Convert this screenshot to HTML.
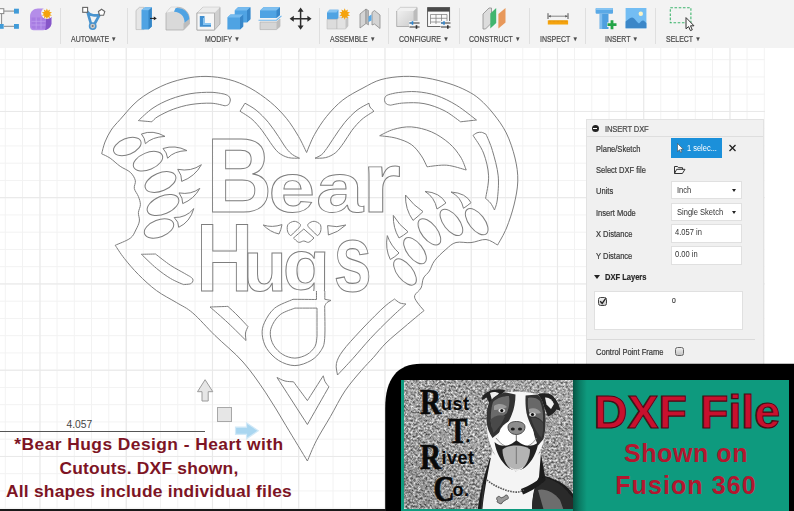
<!DOCTYPE html>
<html>
<head>
<meta charset="utf-8">
<title>Insert DXF - Bear Hugs</title>
<style>
*{box-sizing:border-box;margin:0;padding:0}
html,body{width:794px;height:511px;overflow:hidden;background:#fff;font-family:"Liberation Sans",sans-serif}
#root{position:absolute;left:0;top:0;width:794px;height:511px;overflow:hidden;background:#fff}
.abs{position:absolute}
#grid{position:absolute;left:0;top:0;width:794px;height:511px}
#toolbar{position:absolute;left:0;top:0;width:794px;height:47.5px;background:#f3f3f3}
.sep{position:absolute;top:8px;width:1px;height:36px;background:#dfdfdf}
.tl{position:absolute;top:33.9px;height:10px;font-size:8.3px;line-height:10px;color:#4a4a4a;-webkit-text-stroke:.2px #4a4a4a;white-space:nowrap;letter-spacing:0;filter:blur(.3px);transform:scaleX(.84);transform-origin:0 0}
.tl i{font-style:normal;font-size:6px;margin-left:3px;position:relative;top:-0.5px;display:inline-block;transform:scaleX(1.1)}
#panel{position:absolute;left:586px;top:119px;width:178px;height:250px;background:#f0f0f0;border:1px solid #e2e2e2;filter:blur(.3px)}
#panel .hd{position:absolute;left:0;top:0;width:100%;height:17px;border-bottom:1px solid #dedede;background:#f1f1f1}
.pl{position:absolute;left:9px;font-size:8.4px;line-height:10px;color:#383838;-webkit-text-stroke:.2px #383838;white-space:nowrap;transform:scaleX(.9);transform-origin:0 0}
.inp span{display:inline-block;transform:scaleX(.9);transform-origin:0 0}
.inp{position:absolute;left:84px;width:71px;height:18px;background:#fff;border:1px solid #e0e0e0;font-size:8.4px;line-height:16px;color:#333;padding-left:5px;white-space:nowrap}
.caret{position:absolute;right:5px;top:7px;width:0;height:0;border-left:2.5px solid transparent;border-right:2.5px solid transparent;border-top:3px solid #222}
#caption{position:absolute;left:0;top:433.3px;width:298px;text-align:center;color:#7d1424;font-weight:bold;font-size:17.4px;line-height:23.45px;white-space:nowrap;letter-spacing:0.22px}
#blk{position:absolute;left:385px;top:363.7px;width:420px;height:160px;background:#000;border-top-left-radius:37px 40px}
#green{position:absolute;left:401px;top:380px;width:388px;height:131px;background:#0e9a7e}
#dog{position:absolute;left:404.3px;top:380px;width:169px;height:128.6px}
.red{position:absolute;text-align:center;font-weight:bold;white-space:nowrap}
</style>
</head>
<body>
<div id="root">

<!-- canvas grid -->
<svg id="grid" viewBox="0 0 794 511">
<defs>
<pattern id="gm" x="4.8" y="7.45" width="17.25" height="17.25" patternUnits="userSpaceOnUse">
<path d="M0.5 0V17.25M0 0.5H17.25" stroke="#f2f2f2" stroke-width="1" fill="none"/>
</pattern>
<pattern id="gM" x="39.55" y="24.7" width="86.25" height="86.25" patternUnits="userSpaceOnUse">
<path d="M0.5 0V86.25M0 0.5H86.25" stroke="#e8e8e8" stroke-width="1" fill="none"/>
</pattern>
</defs>
<rect width="765" height="511" fill="url(#gm)"/>
<rect width="765" height="511" fill="url(#gM)"/>
</svg>

<!-- HEART -->
<svg id="heart" class="abs" style="left:0;top:0" width="794" height="511" viewBox="0 0 794 511">
<g fill="none" stroke="#7e7e7e" stroke-width="1" stroke-linejoin="round">
<path d="M101.7 153.8C102.2 151.8 103.4 146.0 105.0 142.0C106.6 138.0 108.7 133.8 111.2 130.0C113.8 126.2 115.8 124.2 120.3 119.3C124.8 114.4 131.3 105.9 138.0 100.4C144.7 94.9 153.1 90.1 160.7 86.5C168.3 82.9 175.8 80.6 183.4 78.9C191.0 77.2 198.4 76.3 206.0 76.4C213.6 76.5 221.5 77.6 228.8 79.5C236.1 81.4 243.1 84.2 250.0 88.0C256.9 91.8 264.2 97.0 270.3 102.0C276.4 107.0 281.7 112.6 286.4 118.3C291.1 124.0 295.1 130.7 298.5 136.4C301.9 142.1 305.2 149.8 306.6 152.5C307.9 149.5 311.2 140.4 314.6 134.4C318.0 128.4 322.0 122.0 326.7 116.3C331.4 110.6 336.8 104.7 342.8 100.0C348.9 95.3 356.6 91.4 363.0 88.0C369.4 84.6 374.2 81.5 381.0 79.6C387.8 77.7 396.1 76.7 403.7 76.4C411.3 76.1 418.9 76.8 426.5 78.0C434.1 79.2 442.3 81.4 449.0 83.5C455.7 85.6 461.7 88.1 466.9 90.8C472.1 93.5 475.6 95.6 480.0 99.5C484.4 103.4 489.2 108.4 493.6 114.0C498.0 119.6 502.7 125.7 506.3 133.0C509.9 140.3 513.1 150.0 515.0 158.0C516.9 166.0 518.0 173.2 517.8 181.0C517.6 188.8 515.9 197.2 514.0 205.0C512.1 212.8 509.2 221.3 506.5 228.0C503.8 234.7 499.1 242.2 497.6 245.0C495.7 244.1 490.4 239.9 486.0 239.5C481.6 239.1 476.0 242.1 471.0 242.6C466.0 243.1 460.2 241.4 456.0 242.5C451.8 243.6 449.5 246.3 445.9 249.4C442.3 252.5 437.2 257.2 434.5 260.8C431.8 264.4 431.2 268.1 429.4 271.0C427.6 273.9 424.9 275.2 423.5 278.0C422.1 280.8 422.5 285.1 421.0 288.0C419.5 290.9 415.4 293.2 414.7 295.5C414.0 297.8 415.4 299.5 417.0 302.0C418.6 304.5 422.8 309.2 424.0 310.6C420.8 313.2 411.3 321.1 405.0 326.5C398.7 331.9 391.2 337.9 386.0 343.0C380.8 348.1 377.7 352.7 373.6 357.3C369.5 361.9 366.2 364.9 361.4 370.5C356.6 376.1 350.2 383.2 345.0 390.9C339.8 398.6 335.2 408.3 330.4 416.6C325.6 424.9 320.1 433.4 316.3 440.8C312.5 448.2 308.9 457.6 307.4 461.0C303.8 455.1 292.9 437.1 286.0 425.7C279.1 414.3 273.0 403.4 265.8 392.8C258.6 382.2 251.5 371.6 243.0 362.0C234.5 352.4 223.4 343.7 215.0 335.5C206.6 327.3 199.2 318.5 192.8 313.0C186.4 307.5 182.8 306.4 176.7 302.7C170.6 299.0 162.9 295.3 156.5 290.6C150.1 285.9 143.8 279.9 138.4 274.5C133.0 269.1 128.2 263.3 124.3 258.4C120.4 253.5 116.7 247.5 115.2 245.3C117.7 244.1 126.9 240.8 130.3 238.2C133.7 235.6 134.3 232.9 135.8 230.0C137.3 227.1 139.0 223.9 139.4 221.0C139.8 218.1 138.2 215.3 138.4 212.6C138.6 209.9 140.4 207.3 140.4 204.6C140.4 201.9 139.4 199.2 138.4 196.5C137.4 193.8 134.8 191.1 134.3 188.4C133.8 185.7 136.0 183.1 135.3 180.4C134.6 177.7 132.8 174.7 130.3 172.3C127.8 170.0 123.6 168.7 120.2 166.3C116.8 164.0 113.3 160.3 110.2 158.2C107.1 156.1 103.1 154.5 101.7 153.8Z"/>
<path d="M138.4 120.6C140.8 118.5 147.6 111.6 153.0 108.0C158.4 104.4 164.5 101.4 170.8 99.0C177.1 96.6 184.3 94.7 191.0 93.6C197.7 92.5 205.5 92.2 211.0 92.3C216.5 92.4 221.8 93.7 224.0 94.0C224.8 94.3 227.4 95.0 228.5 96.0C229.6 97.0 230.3 98.6 230.3 100.0C230.3 101.4 229.5 103.5 228.6 104.5C227.7 105.5 225.6 105.6 225.0 105.8C222.7 105.4 216.7 103.4 211.0 103.2C205.3 103.0 197.3 103.5 191.0 104.5C184.7 105.5 178.8 107.2 173.3 109.2C167.8 111.2 161.6 114.4 158.0 116.5C154.4 118.6 152.8 120.9 151.8 121.8C149.6 121.6 140.6 120.8 138.4 120.6Z"/>
<path d="M476.5 120.0C473.2 117.6 463.4 109.5 456.8 105.4C450.2 101.3 443.3 97.9 436.6 95.6C429.9 93.3 422.7 92.2 416.4 91.7C410.1 91.2 403.3 92.0 398.7 92.5C394.1 93.0 390.6 94.2 389.0 94.5C388.4 94.8 386.2 95.5 385.5 96.5C384.8 97.5 384.3 99.2 384.5 100.5C384.7 101.8 385.5 103.2 386.5 104.0C387.5 104.8 389.8 105.0 390.5 105.2C392.7 104.8 398.1 103.3 403.7 103.0C409.3 102.7 417.3 102.3 424.0 103.6C430.7 104.8 437.9 107.5 444.0 110.5C450.1 113.5 457.8 119.9 460.6 121.8C463.2 121.5 473.9 120.3 476.5 120.0Z"/>
<path d="M245.0 103.2C246.9 104.4 252.3 107.0 256.2 110.2C260.1 113.4 264.6 117.9 268.3 122.3C272.0 126.7 275.4 132.0 278.4 136.4C281.4 140.8 284.0 145.5 286.4 148.5C288.8 151.5 290.3 153.0 292.5 154.6C294.7 156.2 298.3 157.6 299.5 158.2C297.6 158.1 291.9 158.5 288.4 157.6C284.9 156.7 281.4 155.0 278.4 152.5C275.4 150.0 273.0 146.2 270.3 142.5C267.6 138.8 265.1 134.3 262.0 130.4C258.9 126.5 255.7 122.5 252.0 119.3C248.3 116.1 242.0 112.5 240.0 111.2C240.8 109.9 244.2 104.5 245.0 103.2Z"/>
<path d="M369.0 103.2C367.0 104.4 361.0 107.0 357.0 110.2C353.0 113.4 348.6 117.9 344.9 122.3C341.2 126.7 337.8 132.0 334.8 136.4C331.8 140.8 328.9 145.5 326.7 148.5C324.5 151.5 323.6 153.0 321.7 154.6C319.8 156.2 316.1 157.6 315.0 158.2C316.8 158.1 322.2 158.5 325.7 157.6C329.2 156.7 332.8 155.0 335.8 152.5C338.8 150.0 341.2 146.2 343.9 142.5C346.6 138.8 348.9 134.3 351.9 130.4C354.9 126.5 358.3 122.5 362.0 119.3C365.7 116.1 372.0 112.5 374.0 111.2C373.3 110.5 370.8 108.3 370.0 107.0C369.2 105.7 369.2 103.8 369.0 103.2Z"/>
<path d="M379.7 135.7C382.0 134.6 388.3 130.9 393.6 129.4C398.9 127.9 405.0 126.5 411.3 126.9C417.6 127.3 425.2 129.2 431.5 131.9C437.8 134.6 444.3 139.1 449.2 143.3C454.1 147.5 457.8 152.6 460.6 157.0C463.4 161.4 465.3 167.8 466.2 170.0C462.9 169.2 453.2 165.7 446.7 165.2C440.2 164.7 430.3 166.5 427.0 166.8C426.1 165.0 424.0 159.6 421.4 155.9C418.8 152.2 415.5 147.4 411.3 144.5C407.1 141.6 401.5 139.7 396.2 138.2C390.9 136.7 382.4 136.1 379.7 135.7Z"/>
<path d="M473.0 135.4C473.7 135.0 475.6 133.3 477.0 132.8C478.4 132.3 480.0 132.1 481.5 132.3C483.0 132.5 485.2 133.9 486.0 134.2C487.1 136.9 490.4 143.6 492.4 150.5C494.4 157.4 497.4 167.7 498.2 175.8C499.0 183.9 498.0 193.3 497.4 199.0C496.8 204.7 495.0 208.2 494.5 210.0C493.8 208.8 492.0 204.9 490.5 203.0C489.0 201.1 486.4 199.2 485.6 198.5C486.1 194.7 489.0 183.4 488.6 175.8C488.2 168.2 486.1 159.7 483.5 153.0C480.9 146.3 474.8 138.3 473.0 135.4Z"/>
<path d="M141.4 254.3C143.8 254.2 153.2 254.1 155.5 254.0C158.0 255.9 165.7 262.1 170.6 265.4C175.5 268.6 181.5 271.6 184.7 273.5C187.9 275.4 189.1 276.0 190.0 276.5C190.5 276.9 192.4 278.1 192.8 279.0C193.2 279.9 193.0 281.2 192.5 282.0C192.0 282.8 191.3 283.6 189.8 284.0C188.3 284.4 184.6 284.5 183.5 284.6C181.3 283.6 175.1 281.2 170.6 278.5C166.1 275.8 161.4 272.4 156.5 268.4C151.6 264.4 143.9 256.6 141.4 254.3Z"/>
<path d="M210.0 307.0C213.0 306.9 224.9 306.5 227.9 306.4C229.6 308.0 234.7 312.6 238.0 316.0C241.3 319.4 246.3 324.8 248.0 326.6C247.6 327.7 245.8 330.7 245.5 333.0C245.2 335.3 245.9 339.2 246.0 340.5C243.0 337.6 233.9 328.4 227.9 322.8C221.9 317.2 213.0 309.6 210.0 307.0Z"/>
<path d="M394.5 299.0C395.4 299.7 398.1 302.2 400.0 303.0C401.9 303.8 404.9 303.8 405.9 304.0C403.4 306.3 396.6 312.3 390.7 318.0C384.8 323.7 376.8 331.6 370.5 338.4C364.2 345.2 358.3 352.5 352.8 358.6C347.3 364.7 340.1 372.3 337.5 375.0C337.3 373.1 335.5 367.6 336.4 363.6C337.3 359.6 338.7 356.5 342.7 351.0C346.7 345.5 353.7 338.0 360.4 330.8C367.1 323.6 377.3 313.3 383.0 308.0C388.7 302.7 392.6 300.5 394.5 299.0Z"/>
<path d="M277.0 377.5C278.3 378.1 282.2 380.3 285.0 381.0C287.8 381.7 292.1 381.7 293.5 381.8C295.8 384.9 305.1 397.5 307.4 400.6C310.0 396.5 320.6 379.9 323.3 375.8C323.6 376.8 324.1 379.7 325.0 381.5C325.9 383.3 328.2 385.9 328.9 386.8C325.3 393.1 311.0 418.2 307.4 424.5C302.3 416.7 282.1 385.3 277.0 377.5Z"/>
<ellipse cx="127.3" cy="146.5" rx="14.5" ry="8.0" transform="rotate(-22 127.3 146.5)"/>
<ellipse cx="148.0" cy="161.2" rx="15.5" ry="8.5" transform="rotate(-22.5 148.0 161.2)"/>
<ellipse cx="160.5" cy="182.0" rx="16.3" ry="9.0" transform="rotate(-23 160.5 182.0)"/>
<ellipse cx="163.0" cy="205.0" rx="16.8" ry="9.0" transform="rotate(-23 163.0 205.0)"/>
<ellipse cx="159.0" cy="228.5" rx="15.4" ry="8.5" transform="rotate(-21 159.0 228.5)"/>
<ellipse cx="476.7" cy="221.7" rx="15.5" ry="7.8" transform="rotate(52 476.7 221.7)"/>
<ellipse cx="451.4" cy="222.4" rx="15.5" ry="7.8" transform="rotate(52 451.4 222.4)"/>
<ellipse cx="429.4" cy="231.8" rx="15.5" ry="7.8" transform="rotate(52 429.4 231.8)"/>
<ellipse cx="415.0" cy="250.7" rx="15.5" ry="7.8" transform="rotate(52 415.0 250.7)"/>
<ellipse cx="405.0" cy="272.0" rx="15.5" ry="7.8" transform="rotate(52 405.0 272.0)"/>
<path d="M141.4 134.0Q153.0 129.5 165.0 136.4Q152.0 137.0 145.4 143.7Q145.0 138.0 141.4 134.0Z"/>
<path d="M163.0 148.5Q175.0 144.5 187.0 150.6Q174.0 151.0 167.6 158.2Q167.0 152.5 163.0 148.5Z"/>
<path d="M177.7 169.3Q191.0 172.0 201.4 164.7Q195.0 176.5 181.7 181.4Q182.0 175.0 177.7 169.3Z"/>
<path d="M179.0 192.9Q191.0 195.0 199.8 188.4Q194.0 199.0 182.7 203.6Q183.0 198.0 179.0 192.9Z"/>
<path d="M174.2 217.5Q186.0 218.0 193.8 208.6Q190.0 222.0 178.7 227.3Q179.0 222.0 174.2 217.5Z"/>
<path d="M451.0 192.0Q466.0 193.0 471.0 202.7Q467.0 206.0 463.5 208.3Q461.0 197.0 451.0 192.0Z"/>
<path d="M425.0 191.4Q440.0 192.5 445.9 203.0Q441.0 206.5 437.0 209.0Q434.5 197.0 425.0 191.4Z"/>
<path d="M405.5 195.0Q414.0 206.0 423.0 211.6Q418.0 216.5 413.0 220.4Q405.0 209.0 405.5 195.0Z"/>
<path d="M393.3 215.4Q399.0 225.0 408.0 231.8Q403.5 235.5 399.0 238.0Q393.0 228.0 393.3 215.4Z"/>
<path d="M387.3 235.6Q391.0 246.0 399.0 253.0Q395.0 257.0 390.3 259.5Q385.0 249.0 387.3 235.6Z"/>
<path d="M263.2 225.0Q272.0 228.0 282.0 224.6Q281.0 230.0 279.0 234.0Q270.0 232.0 263.2 225.0Z"/>
<path d="M345.8 225.0Q337.0 228.0 327.6 225.6Q328.0 230.0 328.4 235.0Q338.0 232.5 345.8 225.0Z"/>
<path d="M287.5 231.0C287.1 229.2 286.9 226.1 288.0 224.5C289.1 222.9 292.1 221.5 294.0 221.3C295.9 221.1 298.5 222.6 299.5 223.5C300.5 224.4 301.0 224.9 300.0 226.5C299.0 228.1 295.1 231.5 293.5 233.0C291.9 234.5 291.5 235.8 290.5 235.5C289.5 235.2 287.9 232.8 287.5 231.0Z"/>
<path d="M320.7 231.0C321.1 229.2 321.3 226.1 320.2 224.5C319.1 222.9 316.1 221.5 314.2 221.3C312.3 221.1 309.7 222.6 308.7 223.5C307.7 224.4 307.2 224.9 308.2 226.5C309.2 228.1 313.1 231.5 314.7 233.0C316.3 234.5 316.7 235.8 317.7 235.5C318.7 235.2 320.3 232.8 320.7 231.0Z"/>
<path d="M293.5 238.0C295.2 236.5 302.1 230.5 303.8 229.0C305.5 230.5 312.3 236.5 314.0 238.0C313.1 238.7 310.4 241.8 308.7 242.3C307.0 242.8 305.5 241.0 303.8 241.0C302.1 241.0 300.3 242.8 298.6 242.3C296.9 241.8 294.4 238.7 293.5 238.0Z"/>
<path d="M316.5 291.0C316.5 292.4 316.5 298.1 316.5 299.5C312.6 299.5 296.9 299.3 293.0 299.3C289.9 300.8 279.4 304.3 274.7 308.1C270.0 311.9 266.7 317.8 264.6 322.2C262.5 326.6 261.9 329.9 262.2 334.3C262.5 338.7 263.9 344.0 266.6 348.4C269.4 352.8 274.0 357.6 278.7 360.5C283.4 363.4 289.5 365.6 294.9 365.6C300.3 365.6 306.6 363.0 311.0 360.5C315.4 358.0 318.7 354.2 321.0 350.5C323.3 346.8 324.1 345.8 324.7 338.4C325.3 331.0 324.7 311.4 324.7 306.0C325.1 305.4 325.9 303.4 327.0 302.5C328.1 301.6 330.3 300.8 331.0 300.4C330.0 300.2 325.8 299.5 324.8 299.3C324.8 297.9 324.8 292.4 324.8 291.0"/>
<path d="M317.0 308.1C313.3 308.1 298.6 308.1 294.9 308.1C292.5 309.1 284.5 311.5 280.8 314.2C277.1 316.9 274.4 320.9 272.7 324.3C270.9 327.7 270.1 330.8 270.3 334.3C270.5 337.8 271.6 342.0 273.7 345.4C275.8 348.8 279.3 352.4 282.8 354.5C286.3 356.6 290.9 358.1 294.9 358.1C298.9 358.1 303.6 356.4 307.0 354.5C310.4 352.6 313.3 349.4 315.0 346.4C316.7 343.4 316.7 338.0 317.0 336.3C317.0 331.6 317.0 312.8 317.0 308.1Z"/>
</g>
<defs><clipPath id="gclip"><rect x="-10" y="-80" width="200" height="81.7"/></clipPath></defs>
<g fill="none" stroke="#7e7e7e" stroke-width="1" font-family="Liberation Sans, sans-serif" font-weight="bold" style="vector-effect:non-scaling-stroke">
<text transform="translate(206.6 212.0) scale(0.9082 1.0523)" font-size="100" vector-effect="non-scaling-stroke">B</text>
<text transform="translate(268.6 211.9) scale(0.8382 0.7007)" font-size="100" vector-effect="non-scaling-stroke">e</text>
<text transform="translate(316.1 211.9) scale(0.8515 0.7044)" font-size="100" vector-effect="non-scaling-stroke">a</text>
<text transform="translate(362.1 212.0) scale(1.0000 0.8550)" font-size="100" vector-effect="non-scaling-stroke">r</text>
<text transform="translate(196.2 290.8) scale(0.7857 0.9564)" font-size="100" vector-effect="non-scaling-stroke">H</text>
<text transform="translate(243.6 290.7) scale(0.7054 0.7286)" font-size="100" vector-effect="non-scaling-stroke">u</text>
<text transform="translate(282.8 289.8) scale(0.7729 0.717)" font-size="100" clip-path="url(#gclip)" vector-effect="non-scaling-stroke">g</text>
<text transform="translate(333.8 290.7) scale(0.6812 0.9416)" font-size="100" vector-effect="non-scaling-stroke">s</text>
</g>
</svg>

<!-- dimension + manipulators -->
<svg class="abs" style="left:0;top:0" width="794" height="511" viewBox="0 0 794 511">
<line x1="0" y1="431.5" x2="205" y2="431.5" stroke="#555" stroke-width="1"/>
<text x="66.5" y="427.6" font-family="Liberation Sans, sans-serif" font-size="10.3" fill="#444">4.057</text>
<g filter="url(#mb)">
<path d="M205.100 379.700L212.800 391.700H208.200V401H202V391.700H197.500Z" fill="#e6e6e6" stroke="#9a9a9a" stroke-width="1"/>
<rect x="217.500" y="407.500" width="14" height="14" fill="#e6e6e6" stroke="#a8a8a8" stroke-width="1"/>
<path d="M258.300 430.800L246.500 422.800V427.200H235.500V434.400H246.500V438.800Z" fill="#a9d6f0" stroke="#d2e9f7" stroke-width="1.200"/>
</g>
<defs><filter id="mb"><feGaussianBlur stdDeviation=".4"/></filter></defs>
</svg>

<div id="caption"><span style="letter-spacing:.44px">*Bear Hugs Design - Heart with</span><br>Cutouts. DXF shown,<br>All shapes include individual files</div>

<!-- TOOLBAR -->
<div id="toolbar">
<div class="sep" style="left:60px"></div>
<div class="sep" style="left:127px"></div>
<div class="sep" style="left:319px"></div>
<div class="sep" style="left:388px"></div>
<div class="sep" style="left:459px"></div>
<div class="sep" style="left:529px"></div>
<div class="sep" style="left:585px"></div>
<div class="sep" style="left:655px"></div>
<div class="tl" style="left:71px">AUTOMATE<i>&#9660;</i></div>
<div class="tl" style="left:205px">MODIFY<i>&#9660;</i></div>
<div class="tl" style="left:330px">ASSEMBLE<i>&#9660;</i></div>
<div class="tl" style="left:399px">CONFIGURE<i>&#9660;</i></div>
<div class="tl" style="left:469px">CONSTRUCT<i>&#9660;</i></div>
<div class="tl" style="left:539.5px">INSPECT<i>&#9660;</i></div>
<div class="tl" style="left:604.5px">INSERT<i>&#9660;</i></div>
<div class="tl" style="left:665.5px">SELECT<i>&#9660;</i></div>
<svg id="icons" class="abs" style="left:0;top:0" width="794" height="48" viewBox="0 0 794 48">
<defs>
<filter id="ib" x="-10%" y="-10%" width="120%" height="120%"><feGaussianBlur stdDeviation="0.35"/></filter>
<linearGradient id="gcube" x1="0" y1="0" x2="1" y2="1"><stop offset="0" stop-color="#f4f4f4"/><stop offset="1" stop-color="#c9c9c9"/></linearGradient>
</defs>
<g filter="url(#ib)">
<!-- sketch rect icon -->
<path d="M4 11.100H14M1.600 14V24M4 26.300H14" stroke="#8a8a8a" stroke-width="1" fill="none"/>
<rect x="-1" y="8.700" width="4.800" height="4.900" fill="#fff" stroke="#888" stroke-width="1"/>
<rect x="14" y="8.700" width="4.900" height="4.900" fill="#3f9bd8"/>
<rect x="-1" y="24" width="4.700" height="4.800" fill="#3f9bd8"/>
<rect x="14" y="24" width="4.900" height="4.800" fill="#3f9bd8"/>
<!-- purple form -->
<path d="M30 16.500C30 11.500 33.500 8.500 38 8.400H43.500L51.400 17V23.500C51.400 27 47 30.200 43 30.200H33.500C31.500 30.200 30 28.700 30 26.500Z" fill="#b48de9"/>
<path d="M46 19L51.400 17V23.500C51.400 27 47.500 29.800 45 30Z" fill="#8657c8"/>
<path d="M31.500 17.500H45.500V28.800H33.500C32.300 28.800 31.500 28 31.500 26.800Z" fill="#a77be2"/>
<path d="M36.200 17.500V28.800M41 17.500V28.800M31.500 21.300H45.500M31.500 25H45.500" stroke="#c3a3f0" stroke-width=".7" fill="none"/>
<circle cx="46.900" cy="13.200" r="5.800" fill="#f3f3f3"/>
<g transform="translate(46.900 13.200) scale(.88) translate(-46.900 -13.200)"><path d="M46.900 7.800l1.100 2.700 2.500-1.500-.8 2.800 2.900.4-2.300 1.800 2.300 1.800-2.900.4.800 2.800-2.500-1.500-1.100 2.700-1.100-2.700-2.500 1.500.8-2.800-2.900-.4 2.300-1.800-2.300-1.800 2.900-.4-.8-2.800 2.500 1.500z" fill="#f5a30a"/></g>
<!-- automate -->
<path d="M87.500 11.800L91 24M99.800 14.300L94.500 24M87.500 11.800C89.500 15.600 96.500 16.400 99.800 14.300" stroke="#4a94cf" stroke-width="2.700" fill="none" stroke-linecap="round" stroke-linejoin="round"/>
<rect x="82.700" y="7.400" width="4.900" height="4.900" fill="#fff" stroke="#666" stroke-width="1.100"/>
<path d="M101.600 9.200L104.800 11.500 103.600 15.300H99.600L98.400 11.500Z" fill="#fff" stroke="#666" stroke-width="1.100"/>
<circle cx="92.700" cy="26.100" r="3.200" fill="#c8c8c8" stroke="#4a94cf" stroke-width="1.500"/>
<circle cx="92.700" cy="26.100" r="1" fill="#777"/>
<!-- press pull -->
<path d="M136 10.500L139.500 7.300H144V29.600H136Z" fill="#e6e6e6" stroke="#b0b0b0" stroke-width=".6"/>
<path d="M141.500 10L145 7.300H151.800V26.500L148.500 29.600H141.500Z" fill="#4fa3e3"/>
<path d="M148.500 10.200L151.800 7.300V26.500L148.500 29.600Z" fill="#3586c6"/>
<path d="M141.500 10L145 7.300H151.800L148.500 10.200Z" fill="#7fc0f0"/>
<path d="M150 18.400H155" stroke="#222" stroke-width="1"/>
<path d="M153.800 16.600L156.800 18.400 153.800 20.200Z" fill="#222"/>
<!-- fillet -->
<path d="M166 13L171 7.300H178C184 7.300 189.300 12.500 189.300 18.500V24L183.500 30H166Z" fill="#d9d9d9" stroke="#a8a8a8" stroke-width=".7"/>
<path d="M166 13L171 7.300H177L174 11.500C171 11.500 168 12 166 13Z" fill="#f2f2f2"/>
<path d="M183.500 30V23.500L189.300 18.500V24Z" fill="#bdbdbd"/>
<path d="M175.500 8.200C183 7.300 189 12 189.300 19L184.500 22.800C184.800 16.500 180.500 12 174 11.800Z" fill="#4fa3e3"/>
<!-- shell -->
<path d="M197 13L203 7.300H220V24L214.500 30H197Z" fill="#cfcfcf" stroke="#a0a0a0" stroke-width=".7"/>
<path d="M197 13L203 7.300H220L214.500 13Z" fill="#ececec"/>
<rect x="197" y="13" width="17.500" height="17" fill="#f6f6f6" stroke="#a0a0a0" stroke-width=".7"/>
<path d="M199.800 16H204.500V23H211V26.800H199.800Z" fill="#3f8fd0"/>
<path d="M203 18H204.500V23H211V25H203Z" fill="#86c4f2"/>
<!-- combine -->
<path d="M234.700 10.500L238 7.300H250.400V19.300L247 22.400H234.700Z" fill="#4fa3e3"/>
<path d="M234.700 10.500L238 7.300H250.400L247 10.500Z" fill="#76bbef"/>
<path d="M247 10.500L250.400 7.300V19.300L247 22.400Z" fill="#3787c9"/>
<path d="M227.400 17.500L230.500 14.500H243.200V26.500L240 29.600H227.400Z" fill="#4fa3e3"/>
<path d="M227.400 17.500L230.500 14.500H243.200L240 17.500Z" fill="#76bbef"/>
<path d="M240 17.500L243.200 14.500V26.500L240 29.600Z" fill="#3787c9"/>
<!-- split -->
<path d="M260 10.500L263.500 7.300H280V15L276.500 18H260Z" fill="#4fa3e3"/>
<path d="M260 10.500L263.500 7.300H280L276.500 10.500Z" fill="#7fc0f0"/>
<path d="M276.500 10.500L280 7.300V15L276.500 18Z" fill="#3787c9"/>
<path d="M260 22L276.500 22 280 19V26.500L276.500 29.600H260Z" fill="#d6d6d6" stroke="#a8a8a8" stroke-width=".6"/>
<path d="M276.500 22L280 19V26.500L276.500 29.600Z" fill="#bdbdbd"/>
<path d="M258.500 20.200H276.500L281.500 15.800" stroke="#6db6ee" stroke-width="1.100" fill="none"/>
<!-- move -->
<path d="M300.600 10V27.500M292 18.700H309.500" stroke="#2e2e2e" stroke-width="1.500" fill="none"/>
<path d="M300.600 7.600L303.600 11.800H297.600ZM300.600 29.800L303.600 25.600H297.600ZM289.600 18.700L293.800 15.700V21.700ZM311.600 18.700L307.400 15.700V21.700Z" fill="#2e2e2e"/>
<!-- assemble: new component -->
<path d="M327 12.500L329.500 9.700H338.500V19.400H327Z" fill="#4fa3e3"/>
<path d="M327 12.500L329.500 9.700H338.500L336.500 12.500Z" fill="#86c4f2"/>
<path d="M327 19.400H337V29H327Z" fill="#dcdcdc" stroke="#b0b0b0" stroke-width=".5"/>
<path d="M337 19.400L339.500 17H348V26L345.500 29H337Z" fill="#e2e2e2" stroke="#b0b0b0" stroke-width=".5"/>
<path d="M345.500 19.600L348 17V26L345.500 29Z" fill="#c4c4c4"/>
<path d="M344.700 8.300l1 2.500 2.300-1.400-.7 2.600 2.700.3-2.100 1.700 2.100 1.700-2.700.3.700 2.600-2.300-1.400-1 2.500-1-2.500-2.300 1.400.7-2.600-2.700-.3 2.100-1.700-2.100-1.700 2.700-.3-.7-2.600 2.300 1.400z" fill="#f5a30a"/>
<!-- joint -->
<path d="M360 14L366 9V23.500L360 28Z" fill="#d4d4d4" stroke="#8c8c8c" stroke-width=".8"/>
<path d="M366 9L368.500 10.500V25L366 23.500Z" fill="#b8b8b8" stroke="#8c8c8c" stroke-width=".6"/>
<path d="M372 12.500L374.500 10.500 380 15V28.500L374.500 24 372 25Z" fill="#d4d4d4" stroke="#8c8c8c" stroke-width=".8"/>
<path d="M368.500 16.500L371.500 14.500V20.500L368.500 22Z" fill="#5aa9e6"/>
<!-- configure 1 -->
<path d="M396.700 11L400.500 7.400H417V23L413.500 26.500H396.700Z" fill="url(#gcube)" stroke="#9a9a9a" stroke-width=".7"/>
<path d="M413.500 11L417 7.400V23L413.500 26.500Z" fill="#bcbcbc"/>
<path d="M396.700 11L400.500 7.400H417L413.500 11Z" fill="#f0f0f0"/>
<rect x="409" y="21" width="11.500" height="8" fill="#f3f3f3"/>
<path d="M409.500 23H419.600M409.500 27H419.600" stroke="#333" stroke-width="1"/>
<path d="M412.500 21.200V24.800" stroke="#2f86d0" stroke-width="1.600"/>
<path d="M416.500 25.200V28.800" stroke="#333" stroke-width="1.600"/>
<path d="M409.500 23H412" stroke="#2f86d0" stroke-width="1"/>
<!-- configure 2 -->
<rect x="427.600" y="7.600" width="22" height="18.900" fill="#fafafa" stroke="#555" stroke-width=".9"/>
<rect x="427.600" y="7.600" width="22" height="4" fill="#4a4a4a"/>
<path d="M430.500 14.500H447M430.500 18.300H447M430.500 22H447M430.500 14.500V24M436 14.500V24M441.500 14.500V24M447 14.500V24" stroke="#777" stroke-width=".7" fill="none"/>
<rect x="440.500" y="21" width="11" height="8" fill="#f3f3f3"/>
<path d="M441 23H450.500M441 27H450.500" stroke="#333" stroke-width="1"/>
<path d="M444 21.200V24.800" stroke="#2f86d0" stroke-width="1.600"/>
<path d="M447.800 25.200V28.800" stroke="#333" stroke-width="1.600"/>
<path d="M441 23H443.500" stroke="#2f86d0" stroke-width="1"/>
<!-- construct -->
<path d="M483 14L489 8H491.500V23L485.500 29H483Z" fill="#dcdcdc" stroke="#8c8c8c" stroke-width=".8"/>
<path d="M490.300 13.500L496.200 8V23L490.300 28.500Z" fill="#3fb56e"/>
<path d="M498.400 14L505.500 8V22.500L498.400 28.500Z" fill="#e8985a"/>
<!-- inspect -->
<path d="M548.500 16.200H567.500" stroke="#777" stroke-width=".9"/>
<path d="M548 13.200V19M568 13.200V19" stroke="#555" stroke-width="1"/>
<path d="M548.500 16.200l2.200-1.200v2.400zM567.500 16.200l-2.200-1.200v2.400z" fill="#555"/>
<rect x="547.800" y="20.300" width="20.300" height="4.200" fill="#f5a30a"/>
<path d="M550 20.300v1.800M552 20.300v1.200M554 20.300v1.800M556 20.300v1.200M558 20.300v1.800M560 20.300v1.200M562 20.300v1.800M564 20.300v1.200M566 20.300v1.800" stroke="#c47800" stroke-width=".5"/>
<!-- insert bolt -->
<rect x="595.600" y="8" width="17.400" height="5.800" rx="1" fill="#5aa9e6"/>
<rect x="595.600" y="8" width="17.400" height="2" rx="1" fill="#86c4f2"/>
<rect x="599.700" y="13.800" width="8.800" height="15.200" fill="#4f9fdf"/>
<rect x="599.700" y="13.800" width="2.500" height="15.200" fill="#7fbdee"/>
<path d="M612 19.800V29.600M607.100 24.700H616.900" stroke="#f3f3f3" stroke-width="4.600"/>
<path d="M612 20.300V29.200M607.500 24.700H616.500" stroke="#22a447" stroke-width="2.800"/>
<!-- insert image -->
<rect x="625.600" y="8" width="20.800" height="20.300" fill="#73bdf3"/>
<path d="M625.600 28.300V21.500C628 20 629.500 17.500 632 17.500S636.500 22 639 23.500C640.500 22 641.500 20.500 643 20.500S645 22 646.400 23V28.300Z" fill="#3b87c8"/>
<circle cx="640.800" cy="13.800" r="2.200" fill="#fbf3c4"/>
<!-- select -->
<rect x="670.300" y="7.800" width="20.600" height="15" fill="none" stroke="#3fb56e" stroke-width="1.100" stroke-dasharray="2.600 1.600"/>
<path d="M686 17.600V28.800L688.600 26.600 690.400 30.600 692.300 29.800 690.500 25.800H694Z" fill="#f8f8f8" stroke="#333" stroke-width="1"/>
</g>
</svg>
</div>

<!-- PANEL -->
<div id="panel">
<div class="hd">
<div class="abs" style="left:4.5px;top:5px;width:7px;height:7px;border-radius:50%;background:#222"></div>
<div class="abs" style="left:6px;top:8px;width:4px;height:1px;background:#fff"></div>
<div class="pl" style="left:18px;top:3.5px;color:#555;letter-spacing:-0.1px">INSERT DXF</div>
</div>
<div class="pl" style="top:23.5px">Plane/Sketch</div>
<div class="abs" style="left:84px;top:18px;width:51px;height:20px;background:#1b90da;color:#fff;font-size:8.3px;line-height:20px;padding-left:16px;white-space:nowrap"><span style="display:inline-block;transform:scaleX(.9);transform-origin:0 0">1 selec...</span></div>
<svg class="abs" style="left:84px;top:18px" width="80" height="20" viewBox="0 0 80 20"><path d="M6.5 5.5v8l2-1.8 1.2 2.8 1.2-.5-1.2-2.7h2.6z" fill="#fff" stroke="#333" stroke-width=".5"/><path d="M58.5 7l6 6m0-6l-6 6" stroke="#222" stroke-width="1.3" fill="none"/></svg>
<div class="pl" style="top:45px">Select DXF file</div>
<svg class="abs" style="left:86px;top:44px" width="14" height="12" viewBox="0 0 14 12"><path d="M1.5 9.5v-7h3l1 1.2h4v1.6M1.5 9.500l2.200-4.200h8.300l-2.600 4.200z" fill="#f4f4f4" stroke="#333" stroke-width="1" stroke-linejoin="round"/></svg>
<div class="pl" style="top:66px">Units</div>
<div class="inp" style="top:61px"><span>Inch</span><div class="caret"></div></div>
<div class="pl" style="top:88px">Insert Mode</div>
<div class="inp" style="top:83px"><span>Single Sketch</span><div class="caret"></div></div>
<div class="pl" style="top:109px">X Distance</div>
<div class="inp" style="top:104px;padding-left:3px;line-height:15.5px;height:18.5px"><span>4.057 in</span></div>
<div class="pl" style="top:131px">Y Distance</div>
<div class="inp" style="top:126px;padding-left:3px;line-height:15.5px;height:18.5px"><span>0.00 in</span></div>
<div class="abs" style="left:7px;top:154.5px;width:0;height:0;border-left:3px solid transparent;border-right:3px solid transparent;border-top:4.5px solid #222"></div>
<div class="pl" style="left:17.5px;top:151.5px;font-weight:bold;color:#222">DXF Layers</div>
<div class="abs" style="left:6.5px;top:171px;width:149.500px;height:39px;background:#fff;border:1px solid #e0e0e0"></div>
<div class="abs" style="left:11px;top:177px;width:9px;height:9px;border:1px solid #444;border-radius:2.5px;background:linear-gradient(#f0f0f0,#c8c8c8)"></div>
<svg class="abs" style="left:11px;top:176px" width="10" height="10" viewBox="0 0 10 10"><path d="M2.200 5.200l2 2.200 3.500-5" stroke="#222" stroke-width="1.300" fill="none"/></svg>
<div class="pl" style="left:85px;top:176px;font-size:7.5px">0</div>
<div class="abs" style="left:0;top:218.5px;width:168px;height:1px;background:#dadada"></div>
<div class="pl" style="top:227px">Control Point Frame</div>
<div class="abs" style="left:88px;top:227px;width:9px;height:9px;border:1px solid #666;border-radius:2.5px;background:linear-gradient(#eee,#c4c4c4)"></div>
</div>

<!-- BOTTOM RIGHT CARD -->
<svg class="abs" style="left:0;top:0" width="794" height="511" viewBox="0 0 794 511"><path d="M385.200 511V408C385.200 378.800 397.200 363.700 421 363.700H794V511Z" fill="#000"/></svg>
<div id="green"></div>
<div class="abs" style="left:573.3px;top:380px;width:14px;height:131px;background:linear-gradient(90deg,rgba(0,40,30,.62),rgba(0,40,30,.28) 45%,rgba(0,40,30,0))"></div>
<svg id="dog" viewBox="0 0 169 128.6">
<defs>
<filter id="nz" x="0" y="0" width="100%" height="100%" color-interpolation-filters="sRGB">
<feTurbulence type="fractalNoise" baseFrequency="0.42 0.5" numOctaves="2" seed="7" result="t"/>
<feColorMatrix in="t" type="matrix" values="1.15 0 0 0 0.06  1.15 0 0 0 0.06  1.15 0 0 0 0.06  0 0 0 0 1"/>
</filter>
<linearGradient id="lt" x1="0" y1="1" x2="1" y2="0"><stop offset="0" stop-color="#000" stop-opacity=".12"/><stop offset=".5" stop-color="#000" stop-opacity="0"/><stop offset="1" stop-color="#fff" stop-opacity=".12"/></linearGradient>
<filter id="db" x="-5%" y="-5%" width="110%" height="110%"><feGaussianBlur stdDeviation="0.45"/></filter>
<clipPath id="dc"><rect width="169" height="131"/></clipPath>
</defs>
<rect width="169" height="131" fill="#9c9c9c"/>
<rect width="169" height="131" filter="url(#nz)"/>
<rect width="169" height="131" fill="url(#lt)"/>
<g clip-path="url(#dc)" filter="url(#db)">
<!-- body dark -->
<path d="M86 78C80 95 76 112 73.500 131H169V114C163 104 152 99.500 141 96L137 74Z" fill="#1d1d1d"/>
<!-- white chest / neck -->
<path d="M88 72C84 92 80 112 78 131H128C128 118 130 106 135 97L137 72L112 92Z" fill="#f4f4f4"/>
<path d="M128 131C128 120 130 108 135 99L140 97C147 99 156 103 162 110L169 118V131Z" fill="#2a2a2a"/>
<path d="M134 110C140 108 150 112 156 120L160 131H140Z" fill="#8a8a8a" opacity=".7"/>
<!-- ears -->
<path d="M101.700 10.500C96 8.500 90 9 84.500 11.500 80 13.500 77.500 16.500 78 20L82.500 17.500C84.500 21 86 24 87.200 27L93 18Z" fill="#222"/>
<path d="M86 13C89 11.500 93 12 95 13.500L88 20Z" fill="#eee"/>
<path d="M133.500 14.500C139 12.500 145 13 148.500 15.500 153 20 155.500 25 156.500 31L152.500 29.500C151 32.500 148 35 144 36.500L139 24Z" fill="#222"/>
<path d="M141 17.500C145 17 148 19.500 150 24L147 29 142.500 24.500Z" fill="#eee"/>
<!-- head -->
<path d="M101.700 12.500C108 11 127 11.500 133.500 14.500 139 19 141.500 30 141.600 44 141.500 56 139 66 135 73 130 82 122 90 112.300 92 103 90 95 82 90 73 86 65 83 56 82.700 46 82.500 33 85 20 101.700 12.500Z" fill="#f6f6f6"/>
<!-- dark patches -->
<path d="M84.600 24C88 17 95 13.500 101.700 12.500L111.500 14.500C111.500 22 110 29 108 34 106 40 102.500 45 99 49 95 53 91 56 88.500 58 85 53 83 47 82.700 42 82.600 35 83 29 84.600 24Z" fill="#303030"/>
<path d="M89 22C93 18 99 16 105 16 106 22 105 28 103 33 99 36 93 40 88 48 86 40 86.500 30 89 22Z" fill="#6a6a6a"/>
<path d="M86 40C90 36 96 34 101 36 99 42 95 48 89.500 53Z" fill="#4a4a4a"/>
<path d="M121.600 15.500L133.500 14.500C138 18 140.500 25 141.300 34 142 44 141.500 52 139.500 59L134 65.500C131.500 60 130 54 128.500 49 126 43 123.500 38 122.500 33 121.500 27 121.300 21 121.600 15.500Z" fill="#303030"/>
<path d="M124 18C128 17 133 18 136 21 138.500 27 139.500 34 139 42 136 38 131 35.500 126 36 124 30 123.500 24 124 18Z" fill="#686868"/>
<path d="M127 38C131 37 136 39 139 43 139.500 49 139 54 137.500 58 133 53 129 46 127 38Z" fill="#454545"/>
<path d="M90 26C94 23 100 23.500 103 27 100 29 94 30 90 30Z" fill="#9a9a9a"/>
<path d="M125 29C129 27 135 28.500 137 33 133 34 128 33.500 125 32Z" fill="#9a9a9a"/>
<ellipse cx="97.800" cy="30.600" rx="3.300" ry="2" fill="#e0e0e0"/><circle cx="97.800" cy="30.600" r="1.600" fill="#111"/>
<ellipse cx="128.500" cy="34.500" rx="3.300" ry="2" fill="#e0e0e0"/><circle cx="128.500" cy="34.500" r="1.600" fill="#111"/>
<!-- muzzle shading -->
<path d="M96 50C99 44 105 40 112 40S126 44 129 50C131 56 130 62 126 65H99C95 62 94 56 96 50Z" fill="#fff"/>
<path d="M92 58C95 62 98 64.500 101 66M133 58C130 62 127 64.500 124 66" stroke="#777" stroke-width=".8" fill="none"/>
<!-- nose -->
<path d="M104 47C104 43 108 41.500 112.300 41.500S121 43 121 47C121 51.500 117 54.500 112.300 54.500S104 51.500 104 47Z" fill="#8d8d8d" stroke="#333" stroke-width=".8"/>
<ellipse cx="108.800" cy="49" rx="2" ry="1.600" fill="#1a1a1a"/><ellipse cx="116" cy="49" rx="2" ry="1.600" fill="#1a1a1a"/>
<path d="M112.300 54.500V60" stroke="#444" stroke-width=".8"/>
<!-- mouth -->
<path d="M90.500 62C95 66 101 67 106 64.500 109 63 111 61.500 112.300 60 114 61.500 116 63 119 64.500 124 67 130 66 134.500 62 133 72 128 82 121 87.500 116 91 109 91 104 87.500 97 82 92 72 90.500 62Z" fill="#242424"/>
<path d="M98.500 69.500C102 66.500 107 65.500 112.300 65.500S122.500 66.500 126 69.500C126 78 122 86 117.500 89 114.500 90.800 110 90.800 107 89 102.500 86 98.500 78 98.500 69.500Z" fill="#b4b4b4"/>
<path d="M112.300 67V84" stroke="#666" stroke-width=".8"/>
<path d="M106 87.500C109 90.500 116 90.500 119 87.500" stroke="#f2f2f2" stroke-width="1" fill="none"/>
<!-- collar -->
<path d="M117 109C125 106 133 101 140.500 95.500L141.500 100.500C135 106 127 111.500 119 114.500Z" fill="#1a1a1a"/>
<path d="M83 100C90 106 100 110.500 110 112 114 112.500 117 111.500 120 110" stroke="#555" stroke-width="1.600" fill="none" stroke-dasharray="1.600 1"/>
<path d="M93 117.500C94.500 115.500 96.500 116.500 97 118L100.500 116.500C101 114.500 103.500 114.500 104 116.500 105 118 104 119.500 102.500 119.500L98.500 122C98.500 124 96 124.500 95 123 93.500 123 92.500 121.500 93.500 120.500 92.500 119.500 92.300 118.500 93 117.500Z" fill="#9a9a9a" stroke="#333" stroke-width=".7"/>
<path d="M80 104C79 112 78 120 77.500 131" stroke="#333" stroke-width="1.200" fill="none"/>
</g>
<g font-family="Liberation Serif, serif" font-weight="bold" fill="#0a0a0a" stroke="#0a0a0a" stroke-width=".7">
<text transform="translate(16 34.5) scale(.8 1)" font-size="36.500">R</text>
<text transform="translate(44.500 63.500) scale(.8 1)" font-size="35">T</text>
<text transform="translate(16 89) scale(.8 1)" font-size="36.500">R</text>
<text transform="translate(29.500 121.500) scale(.8 1)" font-size="36.500">C</text>
</g>
<g font-family="Liberation Sans, sans-serif" font-weight="bold" fill="#0a0a0a" letter-spacing=".5">
<text x="37" y="29.600" font-size="18">ust</text>
<text x="61.500" y="62.500" font-size="18">.</text>
<text x="37.500" y="83.600" font-size="18">ivet</text>
<text x="48.500" y="116.500" font-size="18">o.</text>
</g>
</svg>
<div class="red" id="t1" style="left:580px;top:386px;width:214px;font-size:46.6px;line-height:52px;color:#c8102e;-webkit-text-stroke:1.2px #4a0a14">DXF File</div>
<div class="red" id="t2" style="left:579px;top:437.5px;width:214px;font-size:25px;line-height:30px;color:#b3162f;letter-spacing:.6px">Shown on</div>
<div class="red" id="t3" style="left:579px;top:470px;width:214px;font-size:25px;line-height:30px;color:#b3162f;letter-spacing:1.1px">Fusion 360</div>
<div class="abs" style="left:0;top:509px;width:386px;height:2px;background:#1a1a1a"></div>
</div>
</body>
</html>
